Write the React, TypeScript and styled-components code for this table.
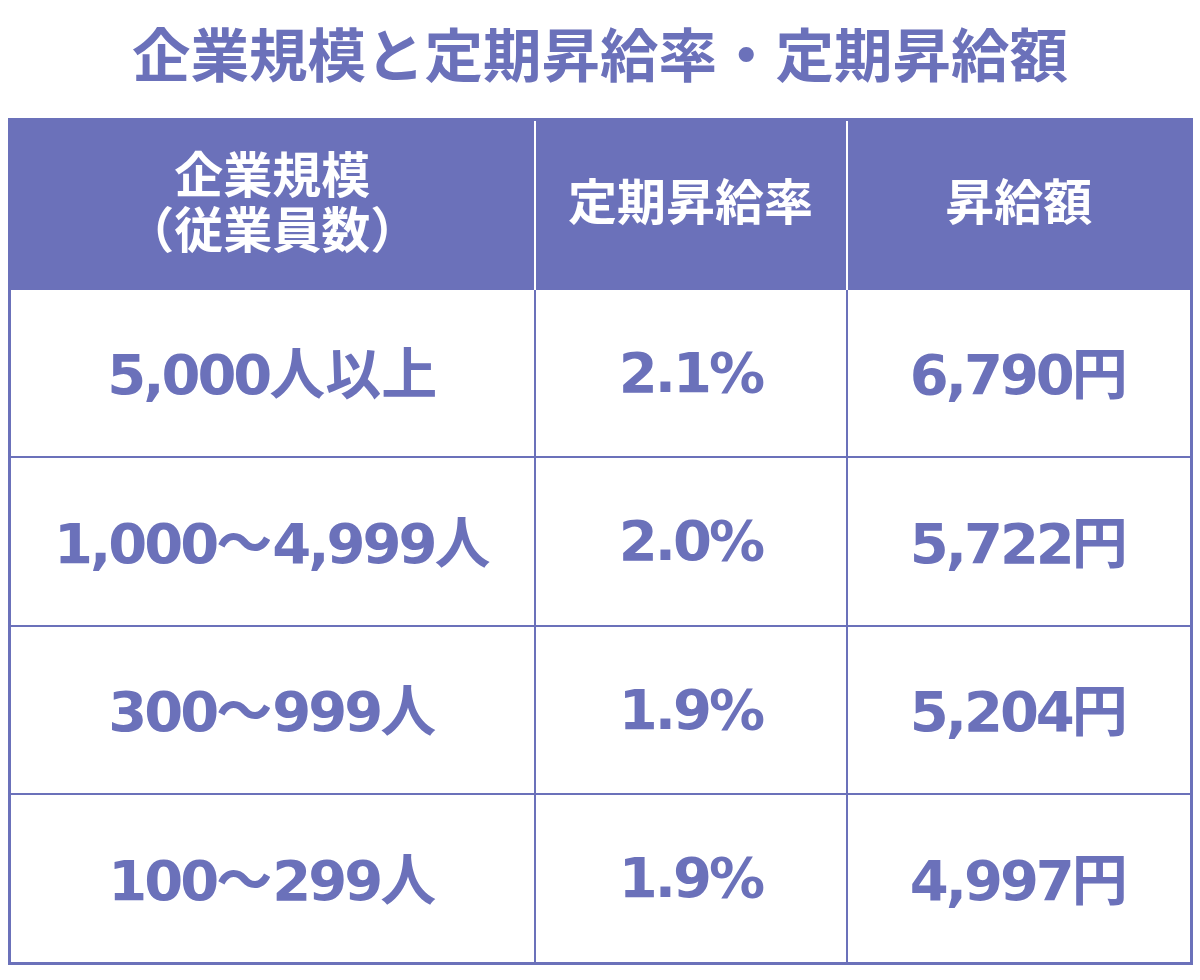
import React from "react";
import styled, { createGlobalStyle } from "styled-components";

const ACCENT = "#6b71ba";

const GlobalStyle = createGlobalStyle`
  html, body {
    margin: 0;
    padding: 0;
    background: #ffffff;
  }
  body {
    font-family: "Noto Sans CJK JP", sans-serif;
  }
`;

const Page = styled.div`
  width: 1200px;
  height: 980px;
  box-sizing: border-box;
  padding: 20px 8px 0 8px;
  display: flex;
  flex-direction: column;
  align-items: stretch;
`;

const Title = styled.h1`
  margin: 0 0 34px 0;
  font-family: "Noto Sans CJK JP", sans-serif;
  font-weight: 700;
  font-size: 58.5px;
  line-height: 64px;
  color: ${ACCENT};
  text-align: center;
  letter-spacing: 0;
`;

const Table = styled.table`
  width: 1182px;
  border-collapse: collapse;
  border: 3px solid ${ACCENT};
  table-layout: fixed;
`;

const HeadCell = styled.th<{ $divider?: boolean }>`
  background: ${ACCENT};
  color: #ffffff;
  font-family: "Noto Sans CJK JP", sans-serif;
  font-weight: 700;
  font-size: 49px;
  line-height: 55px;
  height: 169px;
  padding: 0 0 11px 0;
  box-sizing: border-box;
  text-align: center;
  vertical-align: middle;
  border-left: ${(p) => (p.$divider ? "2px solid #ffffff" : "none")};
  border-top: 3px solid ${ACCENT};
  border-bottom: 0;
`;

const Cell = styled.td`
  border: 2px solid ${ACCENT};
  height: 166.5px;
  padding: 0;
  text-align: center;
  vertical-align: middle;
  color: ${ACCENT};
  font-family: "DejaVu Sans", "Noto Sans CJK JP", sans-serif;
  font-weight: 700;
  font-size: 56px;
  letter-spacing: -3px;
  line-height: 1;
`;

const Kanji = styled.span`
  font-family: "Noto Sans CJK JP", sans-serif;
  letter-spacing: 0;
`;

type Row = { size: React.ReactNode; rate: string; amount: string };

const rows: Row[] = [
  { size: <>5,000<Kanji>人以上</Kanji></>, rate: "2.1%", amount: "6,790" },
  { size: <>1,000<Kanji>～</Kanji>4,999<Kanji>人</Kanji></>, rate: "2.0%", amount: "5,722" },
  { size: <>300<Kanji>～</Kanji>999<Kanji>人</Kanji></>, rate: "1.9%", amount: "5,204" },
  { size: <>100<Kanji>～</Kanji>299<Kanji>人</Kanji></>, rate: "1.9%", amount: "4,997" },
];

export default function App() {
  return (
    <>
      <GlobalStyle />
      <Page>
        <Title>企業規模と定期昇給率・定期昇給額</Title>
        <Table>
          <colgroup>
            <col style={{ width: "525px" }} />
            <col style={{ width: "312px" }} />
            <col style={{ width: "345px" }} />
          </colgroup>
          <thead>
            <tr>
              <HeadCell>
                企業規模
                <br />
                （従業員数）
              </HeadCell>
              <HeadCell $divider>定期昇給率</HeadCell>
              <HeadCell $divider>昇給額</HeadCell>
            </tr>
          </thead>
          <tbody>
            {rows.map((r, i) => (
              <tr key={i}>
                <Cell>{r.size}</Cell>
                <Cell>{r.rate}</Cell>
                <Cell>
                  {r.amount}
                  <Kanji>円</Kanji>
                </Cell>
              </tr>
            ))}
          </tbody>
        </Table>
      </Page>
    </>
  );
}
